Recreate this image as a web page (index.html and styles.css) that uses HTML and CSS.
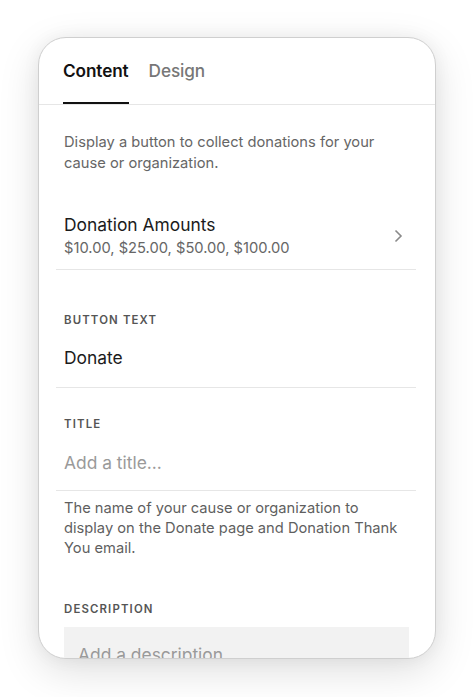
FILE: index.html
```html
<!DOCTYPE html>
<html lang="en">
<head>
<meta charset="utf-8">
<title>Donation block</title>
<link rel="stylesheet" href="styles.css">
</head>
<body>
<div class="stage">
  <div class="card">
    <div class="tabs">
      <div class="tab active">Content</div>
      <div class="tab">Design</div>
    </div>
    <div class="body">
      <p class="intro">Display a button to collect donations for your cause or organization.</p>

      <div class="nav-row">
        <div class="nav-text">
          <div class="nav-title">Donation Amounts</div>
          <div class="nav-sub">$10.00, $25.00, $50.00, $100.00</div>
        </div>
        <svg class="chev" width="9" height="14" viewBox="0 0 9 14"><path d="M1.5 1.5 L7 7 L1.5 12.5" fill="none" stroke="#8a8a8a" stroke-width="1.6"/></svg>
      </div>

      <div class="field first">
        <div class="label">Button Text</div>
        <div class="value">Donate</div>
      </div>

      <div class="field title-field">
        <div class="label">Title</div>
        <div class="value placeholder">Add a title...</div>
      </div>
      <p class="help">The name of your cause or organization to display on the Donate page and Donation Thank You email.</p>

      <div class="label desc-label">Description</div>
      <div class="textarea">Add a description...</div>
    </div>
  </div>
</div>
</body>
</html>
```

FILE: styles.css
```css
* { box-sizing: border-box; }
html, body { margin: 0; padding: 0; background: #ffffff; }
body {
  font-family: "Inter", "Liberation Sans", sans-serif;
  color: #1b1b1b;
  width: 474px;
  height: 697px;
  overflow: hidden;
}
.stage {
  padding: 37px 38px 0 38px;
}
.card {
  width: 398px;
  height: 622px;
  background: #fff;
  border: 1px solid #cfcfcf;
  border-radius: 28px;
  overflow: hidden;
  box-shadow: 0 12px 40px rgba(0, 0, 0, 0.13), 0 0 18px rgba(0, 0, 0, 0.05);
}
.tabs {
  display: flex;
  gap: 20px;
  padding: 0 24px;
  height: 67px;
  border-bottom: 1px solid #e6e6e6;
}
.tab {
  font-size: 17.2px;
  font-weight: 500;
  color: #777;
  line-height: 22px;
  padding-top: 22px;
  height: 66px;
  letter-spacing: -0.1px;
}
.tab.active {
  color: #111;
  font-weight: 600;
  border-bottom: 2px solid #111;
}
.body {
  padding: 0 19px 0 17px;
}
.intro {
  margin: 0;
  padding: 27px 8px 0 8px;
  font-size: 14.7px;
  line-height: 21px;
  color: #666;
}
.nav-row {
  display: flex;
  align-items: center;
  justify-content: space-between;
  margin-top: 40px;
  padding: 0 13px 11px 8px;
  border-bottom: 1px solid #e6e6e6;
}
.nav-title {
  font-size: 17.4px;
  line-height: 22px;
  color: #1b1b1b;
}
.nav-sub {
  margin-top: 2px;
  font-size: 14.7px;
  line-height: 20px;
  color: #666;
}
.chev { display: block; margin-top: 0; }
.field {
  padding: 0 8px 17px 8px;
  margin-top: 28px;
  border-bottom: 1px solid #e6e6e6;
}
.field.first { margin-top: 42px; }
.field.title-field { padding-bottom: 15px; }
.label {
  font-size: 11.4px;
  line-height: 16px;
  font-weight: 600;
  letter-spacing: 1.15px;
  text-transform: uppercase;
  color: #555;
}
.value {
  margin-top: 18px;
  font-size: 17.4px;
  line-height: 24px;
  color: #1b1b1b;
}
.value.placeholder {
  color: #9a9a9a;
  margin-top: 19px;
}
.help {
  margin: 7px 0 0 0;
  padding: 0 8px;
  font-size: 14.7px;
  line-height: 20px;
  color: #5f5f5f;
}
.desc-label {
  margin-top: 43px;
  padding-left: 8px;
}
.textarea {
  margin: 10px 8px 0 8px;
  width: 345px;
  height: 80px;
  background: #f2f2f2;
  padding: 16px 14px;
  font-size: 17.4px;
  line-height: 24px;
  color: #9a9a9a;
}
```
